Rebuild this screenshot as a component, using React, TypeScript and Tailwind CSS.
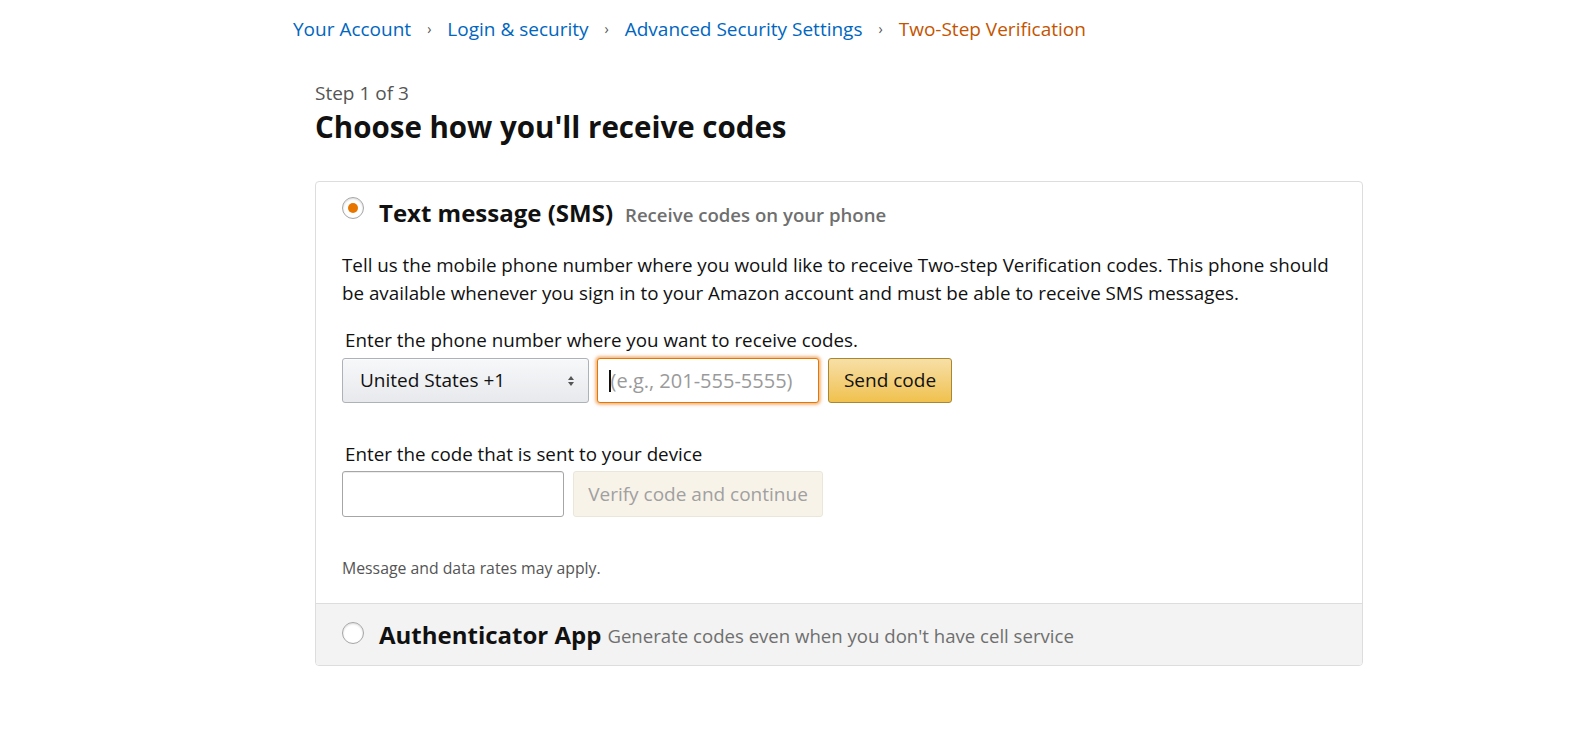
import React from "react";

function Radio({ checked }: { checked?: boolean }) {
  return (
    <span className="flex h-[22px] w-[22px] shrink-0 items-center justify-center rounded-full border border-[#a6a6a6] bg-white shadow-[0_1px_2px_rgba(0,0,0,0.15)_inset]">
      {checked && <span className="h-[10px] w-[10px] rounded-full bg-[#e77600]" />}
    </span>
  );
}

export default function App() {
  return (
    <div
      className="min-h-[732px] bg-white text-[#111]"
      style={{ fontFamily: '"Open Sans", "Liberation Sans", sans-serif' }}
    >
      <nav className="flex items-center pl-[293px] pt-[16px] text-[19px] leading-[26px]">
        <span className="text-[#0066c0]">Your Account</span>
        <span className="mx-[16px] text-[14px] text-[#555]">›</span>
        <span className="text-[#0066c0]">Login &amp; security</span>
        <span className="mx-[16px] text-[14px] text-[#555]">›</span>
        <span className="text-[#0066c0]">Advanced Security Settings</span>
        <span className="mx-[16px] text-[14px] text-[#555]">›</span>
        <span className="text-[#c45500]">Two-Step Verification</span>
      </nav>

      <div className="ml-[315px] mt-[39px] w-[1048px]">
        <div className="text-[19px] leading-[24px] text-[#555]">Step 1 of 3</div>
        <h1 className="mt-[4px] text-[29.5px] font-bold leading-[36px] text-[#111]">
          Choose how you'll receive codes
        </h1>

        <div className="mt-[36px] overflow-hidden rounded-[4px] border border-[#ddd]">
          <div className="px-[26px] pb-[25px] pt-[15px]">
            <div className="flex h-[32px] items-center">
              <span className="-mt-[10px]">
                <Radio checked />
              </span>
              <span className="ml-[15px] text-[24px] font-bold leading-[32px]">Text message (SMS)</span>
              <span className="ml-[12px] mt-[3px] text-[18.6px] font-semibold text-[#6f6f6f]">
                Receive codes on your phone
              </span>
            </div>
            <p className="mt-[22px] text-[18.8px] leading-[28px] text-[#111]">
              <span className="block whitespace-nowrap">
                Tell us the mobile phone number where you would like to receive Two-step Verification codes. This phone should
              </span>
              <span className="block whitespace-nowrap">
                be available whenever you sign in to your Amazon account and must be able to receive SMS messages.
              </span>
            </p>

            <div className="mt-[21px] pl-[3px] text-[18.8px] leading-[24px]">
              Enter the phone number where you want to receive codes.
            </div>
            <div className="mt-[6px] flex items-center">
              <div className="flex h-[45px] w-[247px] items-center justify-between rounded-[3px] border border-[#adb1b8] bg-gradient-to-b from-[#f7f8fa] to-[#e7e9ec] pl-[17px] pr-[13px] text-[19px] shadow-[0_1px_0_rgba(255,255,255,0.6)_inset]">
                <span>United States +1</span>
                <svg width="8" height="12" viewBox="0 0 8 12" className="text-[#555]">
                  <path d="M4 1 L7 5 H1 Z M4 11 L7 7 H1 Z" fill="currentColor" />
                </svg>
              </div>
              <div className="ml-[8px] flex h-[45px] w-[222px] items-center rounded-[3px] border border-[#e77600] bg-white pl-[11px] text-[20px] shadow-[0_0_3px_2px_rgba(228,121,17,0.5)]">
                <span className="h-[22px] w-[1.5px] bg-[#111]" />
                <span className="text-[#9a9a9a]">(e.g., 201-555-5555)</span>
              </div>
              <div className="ml-[9px] flex h-[45px] w-[124px] items-center justify-center rounded-[3px] border border-[#a88734] bg-gradient-to-b from-[#f7dfa5] to-[#f0c14b] text-[19px] text-[#111]">
                Send code
              </div>
            </div>

            <div className="mt-[39px] pl-[3px] text-[18.8px] leading-[24px]">
              Enter the code that is sent to your device
            </div>
            <div className="mt-[5px] flex items-center">
              <div className="h-[46px] w-[222px] rounded-[3px] border border-[#a6a6a6] bg-white shadow-[0_1px_0_rgba(0,0,0,0.07)_inset]" />
              <div className="ml-[9px] flex h-[46px] w-[250px] items-center justify-center rounded-[3px] border border-[#ece6d9] bg-[#f8f3e9] text-[19px] text-[#a0a0a0]">
                Verify code and continue
              </div>
            </div>

            <div className="mt-[41px] text-[15.8px] leading-[20px] text-[#555]">
              Message and data rates may apply.
            </div>
          </div>
          <div className="flex h-[62px] items-center border-t border-[#ddd] bg-[#f3f3f3] px-[26px]">
            <span className="-mt-[3px]">
              <Radio />
            </span>
            <span className="ml-[15px] text-[24px] font-bold">Authenticator App</span>
            <span className="ml-[6px] mt-[3px] text-[18.6px] text-[#6f6f6f]">
              Generate codes even when you don't have cell service
            </span>
          </div>
        </div>
      </div>
    </div>
  );
}
